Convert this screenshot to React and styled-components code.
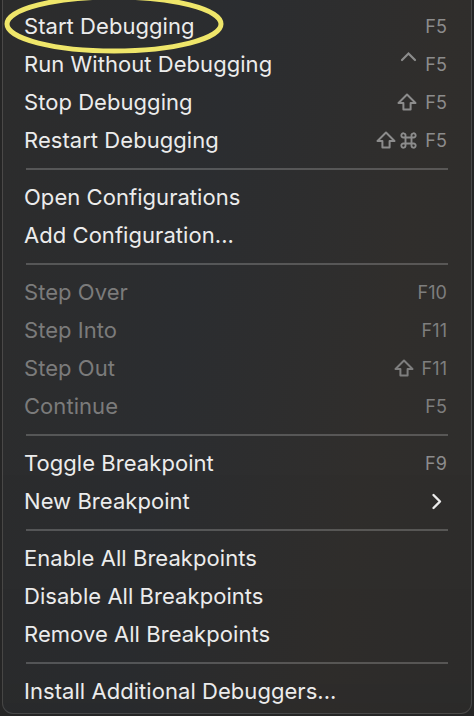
import React from 'react';
import styled, { createGlobalStyle } from 'styled-components';

const GlobalStyle = createGlobalStyle`
  html, body {
    margin: 0;
    padding: 0;
    background: #252525;
  }
  body {
    font-family: 'Inter', 'Liberation Sans', sans-serif;
    -webkit-font-smoothing: antialiased;
  }
`;

const Page = styled.div`
  width: 474px;
  height: 716px;
  overflow: hidden;
`;

const Menu = styled.div`
  position: relative;
  box-sizing: border-box;
  width: 470px;
  height: 714px;
  margin-left: 2px;
  padding-top: 7px;
  border: 1px solid rgba(255, 255, 255, 0.13);
  border-top: none;
  border-radius: 0 0 11px 11px;
  background:
    linear-gradient(180deg, rgba(0, 0, 0, 0) 60%, rgba(0, 0, 0, 0.06) 100%),
    linear-gradient(100deg, #2c2c2c 0%, #2b2d30 40%, #302e2c 75%, #2e2d2c 100%);
`;

const Row = styled.div`
  display: flex;
  align-items: center;
  justify-content: space-between;
  height: 38px;
  padding: 0 24px 0 21px;
  font-size: 22px;
  letter-spacing: 0.05px;
  color: ${(p) => (p.$disabled ? '#7b7b7b' : '#ececec')};
`;

const Shortcut = styled.span`
  display: flex;
  align-items: center;
  gap: 6px;
  font-size: 18px;
  color: ${(p) => (p.$disabled ? '#7e7e7e' : '#8c8c8c')};
`;

const Keys = styled.span`
  display: flex;
  align-items: center;
  gap: 4px;
  margin-right: 2px;
`;

const Separator = styled.div`
  height: 19px;
  display: flex;
  align-items: center;
  padding: 0 23px 0 23px;

  &::after {
    content: '';
    flex: 1;
    height: 2px;
    background: rgba(255, 255, 255, 0.2);
  }
`;

const Mark = styled.svg`
  position: absolute;
  left: 0;
  top: -7px;
  pointer-events: none;
`;

const Shift = () => (
  <svg width="20" height="18" viewBox="0 0 20 18" fill="none">
    <path
      d="M10 1.5 L18.5 10 H13.6 V16.5 H6.4 V10 H1.5 Z"
      stroke="currentColor"
      strokeWidth="2"
      strokeLinejoin="round"
    />
  </svg>
);

const Ctrl = () => (
  <svg width="17" height="17" viewBox="0 0 17 17" fill="none" style={{ marginTop: -9 }}>
    <path d="M2 9 L8.5 2.5 L15 9" stroke="currentColor" strokeWidth="2.2" strokeLinecap="round" />
  </svg>
);

const Cmd = () => (
  <svg width="17" height="17" viewBox="0 0 17 17" fill="none">
    <path
      d="M5.5 5.5 H11.5 V11.5 H5.5 Z M5.5 5.5 V3.8 A2.1 2.1 0 1 0 3.4 5.5 H5.5 M11.5 5.5 V3.8 A2.1 2.1 0 1 1 13.6 5.5 H11.5 M11.5 11.5 V13.2 A2.1 2.1 0 1 0 13.6 11.5 H11.5 M5.5 11.5 V13.2 A2.1 2.1 0 1 1 3.4 11.5 H5.5"
      stroke="currentColor"
      strokeWidth="1.9"
    />
  </svg>
);

const Chevron = () => (
  <svg width="12" height="17" viewBox="0 0 12 17" fill="none" style={{ marginRight: 4 }}>
    <path d="M2.5 2 L9 8.5 L2.5 15" stroke="#ececec" strokeWidth="2.4" strokeLinecap="round" strokeLinejoin="round" />
  </svg>
);

const icons = { shift: Shift, ctrl: Ctrl, cmd: Cmd };

const groups = [
  [
    { label: 'Start Debugging', key: 'F5' },
    { label: 'Run Without Debugging', mods: ['ctrl'], key: 'F5' },
    { label: 'Stop Debugging', mods: ['shift'], key: 'F5' },
    { label: 'Restart Debugging', mods: ['shift', 'cmd'], key: 'F5' },
  ],
  [{ label: 'Open Configurations' }, { label: 'Add Configuration...' }],
  [
    { label: 'Step Over', key: 'F10', disabled: true },
    { label: 'Step Into', key: 'F11', disabled: true },
    { label: 'Step Out', mods: ['shift'], key: 'F11', disabled: true },
    { label: 'Continue', key: 'F5', disabled: true },
  ],
  [{ label: 'Toggle Breakpoint', key: 'F9' }, { label: 'New Breakpoint', submenu: true }],
  [
    { label: 'Enable All Breakpoints' },
    { label: 'Disable All Breakpoints' },
    { label: 'Remove All Breakpoints' },
  ],
  [{ label: 'Install Additional Debuggers...' }],
];

const MenuItem = ({ item }) => (
  <Row $disabled={item.disabled}>
    <span>{item.label}</span>
    {item.submenu ? (
      <Chevron />
    ) : item.key ? (
      <Shortcut $disabled={item.disabled}>
        {item.mods && (
          <Keys>
            {item.mods.map((m) => {
              const Icon = icons[m];
              return <Icon key={m} />;
            })}
          </Keys>
        )}
        {item.key}
      </Shortcut>
    ) : null}
  </Row>
);

export default function App() {
  return (
    <Page>
      <GlobalStyle />
      <Menu>
        {groups.map((group, i) => (
          <React.Fragment key={i}>
            {i > 0 && <Separator />}
            {group.map((item) => (
              <MenuItem key={item.label} item={item} />
            ))}
          </React.Fragment>
        ))}
        <Mark width="230" height="70" viewBox="0 0 230 70">
          <ellipse cx="111" cy="31" rx="107" ry="27" fill="none" stroke="#efe66a" strokeWidth="5" />
        </Mark>
      </Menu>
    </Page>
  );
}
